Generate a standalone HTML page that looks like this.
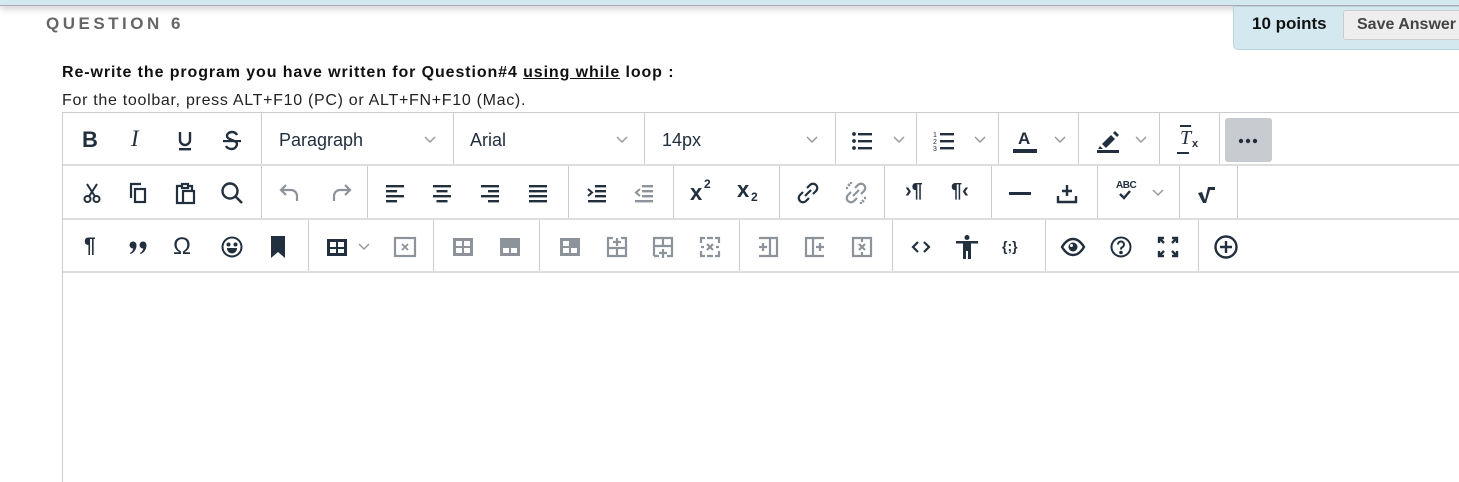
<!DOCTYPE html>
<html><head><meta charset="utf-8"><style>
*{margin:0;padding:0;box-sizing:border-box}
body{width:1459px;height:477px;overflow:hidden;background:#fff;font-family:"Liberation Sans",Arial,sans-serif;position:relative}
.a{position:absolute}
.top{left:0;top:0;width:1459px;height:6px;background:#d4e9ef;border-bottom:1px solid #aab;box-shadow:0 2px 8px rgba(0,0,0,.25)}
.q{left:46px;top:14px;font-size:17px;font-weight:bold;letter-spacing:3.5px;color:#666}
.pts{left:1233px;top:6px;width:240px;height:44px;background:#d4e9ef;border:1px solid #b9d4dc;border-radius:0 0 0 5px}
.pt{left:1252px;top:14px;font-size:17px;font-weight:bold;color:#111}
.btn{left:1343px;top:10px;width:130px;height:30px;background:#eee;border:1px solid #ccc;border-radius:3px;font-size:16px;font-weight:bold;color:#444;padding:5px 0 0 13px;white-space:nowrap}
.t1{left:62px;top:64px;font-size:16px;letter-spacing:0.9px;font-weight:bold;color:#111;white-space:nowrap}
.t2{left:62px;top:92px;font-size:16px;letter-spacing:0.7px;color:#222;white-space:nowrap}
.ed{left:62px;top:112px;width:1400px;height:370px;border-left:1px solid #ccc;border-top:1px solid #ccc}
.hl{left:63px;height:2px;width:1400px;background:#ddd}
.vs{width:1px;background:#ccc}
.tx{font-size:18px;color:#222f3e;top:130px}
.i{position:absolute;width:24px;height:24px}
svg{overflow:visible}
</style></head><body>
<div class="a top"></div>
<div class="a q">QUESTION 6</div>
<div class="a pts"></div>
<div class="a pt">10 points</div>
<div class="a btn">Save Answer</div>
<div class="a t1">Re-write the program you have written for Question#4 <u>using while</u> loop :</div>
<div class="a t2">For the toolbar, press ALT+F10 (PC) or ALT+FN+F10 (Mac).</div>
<div class="a ed"></div>
<div class="a hl" style="top:164px"></div>
<div class="a hl" style="top:218px"></div>
<div class="a hl" style="top:271px"></div>
<div class="a vs" style="left:261px;top:113px;height:51px"></div>
<div class="a vs" style="left:453px;top:113px;height:51px"></div>
<div class="a vs" style="left:644px;top:113px;height:51px"></div>
<div class="a vs" style="left:835px;top:113px;height:51px"></div>
<div class="a vs" style="left:916px;top:113px;height:51px"></div>
<div class="a vs" style="left:998px;top:113px;height:51px"></div>
<div class="a vs" style="left:1078px;top:113px;height:51px"></div>
<div class="a vs" style="left:1159px;top:113px;height:51px"></div>
<div class="a vs" style="left:1219px;top:113px;height:51px"></div>
<div class="a vs" style="left:261px;top:166px;height:52px"></div>
<div class="a vs" style="left:367px;top:166px;height:52px"></div>
<div class="a vs" style="left:568px;top:166px;height:52px"></div>
<div class="a vs" style="left:673px;top:166px;height:52px"></div>
<div class="a vs" style="left:779px;top:166px;height:52px"></div>
<div class="a vs" style="left:884px;top:166px;height:52px"></div>
<div class="a vs" style="left:991px;top:166px;height:52px"></div>
<div class="a vs" style="left:1097px;top:166px;height:52px"></div>
<div class="a vs" style="left:1179px;top:166px;height:52px"></div>
<div class="a vs" style="left:1237px;top:166px;height:52px"></div>
<div class="a vs" style="left:308px;top:220px;height:51px"></div>
<div class="a vs" style="left:433px;top:220px;height:51px"></div>
<div class="a vs" style="left:539px;top:220px;height:51px"></div>
<div class="a vs" style="left:739px;top:220px;height:51px"></div>
<div class="a vs" style="left:892px;top:220px;height:51px"></div>
<div class="a vs" style="left:1045px;top:220px;height:51px"></div>
<div class="a vs" style="left:1198px;top:220px;height:51px"></div>

<div class="a" style="left:82px;top:127px;font-size:22px;font-weight:bold;color:#222f3e">B</div>
<div class="a" style="left:131px;top:126px;font-size:23px;font-style:italic;font-family:'Liberation Serif',serif;color:#222f3e">I</div>
<svg class="i" style="left:173px;top:129px" viewBox="0 0 24 24"><path d="M7 3v8a5 5 0 0 0 10 0V3" fill="none" stroke="#222f3e" stroke-width="2.4"/><rect x="6" y="19" width="12" height="2.4" fill="#222f3e"/></svg>
<svg class="i" style="left:220px;top:129px" viewBox="0 0 24 24"><path d="M17 6c-1-2-3-3-5-3-3 0-5 2-5 4s2 3 5 4 5 2 5 4-2 5-5 5-5-1-6-3" fill="none" stroke="#222f3e" stroke-width="2.4"/><rect x="3" y="11" width="18" height="2.2" fill="#222f3e"/></svg>
<div class="a tx" style="left:279px">Paragraph</div>
<div class="a tx" style="left:470px">Arial</div>
<div class="a tx" style="left:662px">14px</div>
<svg class="i" style="left:424px;top:134px;width:12px;height:12px" viewBox="0 0 12 12"><path d="M1 3l5 5 5-5" fill="none" stroke="#999" stroke-width="1.5"/></svg>
<svg class="i" style="left:616px;top:134px;width:12px;height:12px" viewBox="0 0 12 12"><path d="M1 3l5 5 5-5" fill="none" stroke="#999" stroke-width="1.5"/></svg>
<svg class="i" style="left:806px;top:134px;width:12px;height:12px" viewBox="0 0 12 12"><path d="M1 3l5 5 5-5" fill="none" stroke="#999" stroke-width="1.5"/></svg>
<svg class="i" style="left:893px;top:134px;width:12px;height:12px" viewBox="0 0 12 12"><path d="M1 3l5 5 5-5" fill="none" stroke="#999" stroke-width="1.5"/></svg>
<svg class="i" style="left:974px;top:134px;width:12px;height:12px" viewBox="0 0 12 12"><path d="M1 3l5 5 5-5" fill="none" stroke="#999" stroke-width="1.5"/></svg>
<svg class="i" style="left:1054px;top:134px;width:12px;height:12px" viewBox="0 0 12 12"><path d="M1 3l5 5 5-5" fill="none" stroke="#999" stroke-width="1.5"/></svg>
<svg class="i" style="left:1135px;top:134px;width:12px;height:12px" viewBox="0 0 12 12"><path d="M1 3l5 5 5-5" fill="none" stroke="#999" stroke-width="1.5"/></svg>
<svg class="i" style="left:850px;top:129px" viewBox="0 0 24 24" fill="#222f3e"><circle cx="4" cy="5" r="1.9"/><circle cx="4" cy="12" r="1.9"/><circle cx="4" cy="19" r="1.9"/><rect x="8" y="4" width="14" height="2.4"/><rect x="8" y="11" width="14" height="2.4"/><rect x="8" y="18" width="14" height="2.4"/></svg>
<svg class="i" style="left:932px;top:129px" viewBox="0 0 24 24" fill="#222f3e"><text x="1" y="8" font-size="7" font-family="Liberation Sans">1</text><text x="1" y="15" font-size="7" font-family="Liberation Sans">2</text><text x="1" y="22" font-size="7" font-family="Liberation Sans">3</text><rect x="8" y="4" width="14" height="2.4"/><rect x="8" y="11" width="14" height="2.4"/><rect x="8" y="18" width="14" height="2.4"/></svg>
<div class="a" style="left:1018px;top:129px;font-size:17px;color:#222f3e;font-weight:bold">A</div>
<div class="a" style="left:1013px;top:149px;width:24px;height:4px;background:#222f3e"></div>
<svg class="i" style="left:1096px;top:129px" viewBox="0 0 24 24" fill="#222f3e"><path d="M6 15l9-9 4 4-9 9z M17 4l2-2 4 4-2 2z M4 17l3 3H2z"/><rect x="1" y="21" width="22" height="3"/></svg>
<div class="a" style="left:1180px;top:127px;font-size:20px;font-style:italic;font-family:'Liberation Serif',serif;color:#222f3e;text-decoration:overline">T</div>
<div class="a" style="left:1192px;top:138px;font-size:11px;font-weight:bold;color:#222f3e">x</div>
<div class="a" style="left:1177px;top:152px;width:12px;height:2px;background:#222f3e"></div>
<div class="a" style="left:1225px;top:118px;width:47px;height:44px;background:#c8cbcf;border-radius:3px"></div>
<svg class="i" style="left:1236px;top:129px" viewBox="0 0 24 24" fill="#222f3e"><circle cx="5" cy="12" r="2.2"/><circle cx="12" cy="12" r="2.2"/><circle cx="19" cy="12" r="2.2"/></svg>

<svg class="i" style="left:80px;top:181px" viewBox="0 0 24 24" fill="none" stroke="#222f3e" stroke-width="2"><circle cx="7.5" cy="18" r="3"/><circle cx="16.5" cy="18" r="3"/><path d="M9 15.5L17 3M15 15.5L7 3"/></svg>
<svg class="i" style="left:126px;top:181px" viewBox="0 0 24 24" fill="none" stroke="#222f3e" stroke-width="2.2"><rect x="9" y="8" width="10" height="13"/><path d="M5 17V3h10"/></svg>
<svg class="i" style="left:173px;top:181px" viewBox="0 0 24 24" fill="none" stroke="#222f3e" stroke-width="2.2"><path d="M8 5H4v17h5"/><rect x="9" y="3" width="6" height="4"/><path d="M15 5h4v4"/><rect x="10" y="10" width="11" height="12"/></svg>
<svg class="i" style="left:220px;top:181px" viewBox="0 0 24 24" fill="none" stroke="#222f3e" stroke-width="2.4"><circle cx="10" cy="10" r="7.5"/><path d="M15.5 15.5L22 22"/></svg>
<svg class="i" style="left:278px;top:181px" viewBox="0 0 24 24" fill="none" stroke="#8c939b" stroke-width="2.2"><path d="M8 4L3 9l5 5M3 9h10a6 6 0 0 1 6 6v5"/></svg>
<svg class="i" style="left:329px;top:181px" viewBox="0 0 24 24" fill="none" stroke="#8c939b" stroke-width="2.2"><path d="M16 4l5 5-5 5M21 9H11a6 6 0 0 0-6 6v5"/></svg>
<svg class="i" style="left:383px;top:181px" viewBox="0 0 24 24" fill="#222f3e"><rect x="3" y="4" width="18" height="2.4"/><rect x="3" y="9" width="11" height="2.4"/><rect x="3" y="14" width="18" height="2.4"/><rect x="3" y="19" width="11" height="2.4"/></svg>
<svg class="i" style="left:430px;top:181px" viewBox="0 0 24 24" fill="#222f3e"><rect x="3" y="4" width="18" height="2.4"/><rect x="6.5" y="9" width="11" height="2.4"/><rect x="3" y="14" width="18" height="2.4"/><rect x="6.5" y="19" width="11" height="2.4"/></svg>
<svg class="i" style="left:478px;top:181px" viewBox="0 0 24 24" fill="#222f3e"><rect x="3" y="4" width="18" height="2.4"/><rect x="10" y="9" width="11" height="2.4"/><rect x="3" y="14" width="18" height="2.4"/><rect x="10" y="19" width="11" height="2.4"/></svg>
<svg class="i" style="left:526px;top:181px" viewBox="0 0 24 24" fill="#222f3e"><rect x="3" y="4" width="18" height="2.4"/><rect x="3" y="9" width="18" height="2.4"/><rect x="3" y="14" width="18" height="2.4"/><rect x="3" y="19" width="18" height="2.4"/></svg>
<svg class="i" style="left:585px;top:181px" viewBox="0 0 24 24" fill="#222f3e"><rect x="10" y="4" width="11" height="2.4"/><rect x="10" y="9" width="11" height="2.4"/><rect x="10" y="14" width="11" height="2.4"/><rect x="3" y="19" width="18" height="2.4"/><path d="M3 8l4 3.5-4 3.5" fill="none" stroke="#222f3e" stroke-width="2"/></svg>
<svg class="i" style="left:632px;top:181px" viewBox="0 0 24 24" fill="#8c939b"><rect x="10" y="4" width="11" height="2.4"/><rect x="10" y="9" width="11" height="2.4"/><rect x="10" y="14" width="11" height="2.4"/><rect x="3" y="19" width="18" height="2.4"/><path d="M8 8l-4 3.5 4 3.5" fill="none" stroke="#8c939b" stroke-width="2"/></svg>
<div class="a" style="left:690px;top:180px;font-size:22px;font-weight:bold;color:#222f3e">x</div><div class="a" style="left:704px;top:177px;font-size:12px;font-weight:bold;color:#222f3e">2</div>
<div class="a" style="left:737px;top:177px;font-size:22px;font-weight:bold;color:#222f3e">x</div><div class="a" style="left:751px;top:190px;font-size:12px;font-weight:bold;color:#222f3e">2</div>
<svg class="i" style="left:796px;top:181px" viewBox="0 0 24 24" fill="none" stroke="#222f3e" stroke-width="2.2"><path d="M11 7l3-3a4 4 0 0 1 6 6l-3 3M13 17l-3 3a4 4 0 0 1-6-6l3-3M9 15l6-6"/></svg>
<svg class="i" style="left:844px;top:181px" viewBox="0 0 24 24" fill="none" stroke="#8c939b" stroke-width="2.2"><path d="M11 7l3-3a4 4 0 0 1 6 6l-3 3M13 17l-3 3a4 4 0 0 1-6-6l3-3M9 15l6-6M4 3l2 2M2 7h2M7 1v2M20 21l-2-2M22 17h-2M17 23v-2"/></svg>
<div class="a" style="left:905px;top:180px;font-size:20px;font-weight:bold;color:#222f3e">›¶</div>
<div class="a" style="left:951px;top:180px;font-size:20px;font-weight:bold;color:#222f3e">¶‹</div>
<div class="a" style="left:1009px;top:192px;width:22px;height:3px;background:#222f3e"></div>
<svg class="i" style="left:1055px;top:181px" viewBox="0 0 24 24" fill="none" stroke="#222f3e" stroke-width="2.4"><path d="M3 15v6h18v-6M12 4v11M7 10h10"/></svg>
<div class="a" style="left:1116px;top:180px;font-size:10px;font-weight:bold;color:#222f3e;letter-spacing:-.5px">ABC</div>
<svg class="i" style="left:1117px;top:190px;width:16px;height:10px" viewBox="0 0 16 10"><path d="M3 4l4 4 6-7" fill="none" stroke="#222f3e" stroke-width="2.4"/></svg>
<svg class="i" style="left:1152px;top:187px;width:12px;height:12px" viewBox="0 0 12 12"><path d="M1 3l5 5 5-5" fill="none" stroke="#999" stroke-width="1.5"/></svg>
<svg class="i" style="left:1195px;top:181px" viewBox="0 0 24 24" fill="#222f3e"><path d="M3 12l4-1 3 8 3-13h7v3h-5l-4 13h-3z"/></svg>

<div class="a" style="left:84px;top:234px;font-size:21px;font-weight:bold;color:#222f3e">¶</div>
<svg class="i" style="left:126px;top:235px" viewBox="0 0 24 24" fill="#222f3e"><circle cx="7" cy="10" r="3.5"/><path d="M10.5 10c0 5-3 8-6 9l-.5-1c2-1 3.5-3.5 3.5-6z"/><circle cx="17" cy="10" r="3.5"/><path d="M20.5 10c0 5-3 8-6 9l-.5-1c2-1 3.5-3.5 3.5-6z"/></svg>
<div class="a" style="left:173px;top:233px;font-size:24px;color:#222f3e">Ω</div>
<svg class="i" style="left:220px;top:235px" viewBox="0 0 24 24" fill="none" stroke="#222f3e" stroke-width="2"><circle cx="12" cy="12" r="9.5"/><circle cx="8.5" cy="9.5" r="1" fill="#222f3e"/><circle cx="15.5" cy="9.5" r="1" fill="#222f3e"/><path d="M7.5 13.5h9a4.5 4.5 0 0 1-9 0z" fill="#222f3e" stroke-width="1"/></svg>
<svg class="i" style="left:266px;top:235px" viewBox="0 0 24 24" fill="#222f3e"><path d="M5 1h14v22l-7-6-7 6z"/></svg>
<svg class="i" style="left:325px;top:235px" viewBox="0 0 24 24" fill="#222f3e"><path d="M2 4h20v17H2z M5 7v5h6V7z M13 7v5h6V7z M5 14v4h6v-4z M13 14v4h6v-4z" fill-rule="evenodd"/></svg>
<svg class="i" style="left:358px;top:241px;width:12px;height:12px" viewBox="0 0 12 12"><path d="M1 3l5 5 5-5" fill="none" stroke="#999" stroke-width="1.5"/></svg>
<svg class="i" style="left:393px;top:235px" viewBox="0 0 24 24" fill="none" stroke="#8c939b" stroke-width="2.2"><rect x="2" y="3" width="20" height="18"/><path d="M9 9l6 6M15 9l-6 6" stroke-width="1.8"/></svg>
<svg class="i" style="left:451px;top:235px" viewBox="0 0 24 24" fill="#8c939b"><path d="M2 3h20v18H2z M5 6v5h6V6z M13 6v5h6V6z M5 13v5h6v-5z M13 13v5h6v-5z" fill-rule="evenodd"/></svg>
<svg class="i" style="left:498px;top:235px" viewBox="0 0 24 24" fill="#8c939b"><path d="M2 3h20v18H2z M5 13v5h6v-5z M13 13v5h6v-5z" fill-rule="evenodd"/></svg>
<svg class="i" style="left:558px;top:235px" viewBox="0 0 24 24" fill="#8c939b"><path d="M2 3h20v18H2z M5 6v5h6V6z M5 13v5h6v-5z M13 13v5h6v-5z" fill-rule="evenodd"/></svg>
<svg class="i" style="left:605px;top:235px" viewBox="0 0 24 24" fill="none" stroke="#8c939b" stroke-width="2.2"><path d="M8 3H3v18h18V3h-5M3 13h18M12 13v8M12 3v8M8 7h8"/></svg>
<svg class="i" style="left:651px;top:235px" viewBox="0 0 24 24" fill="none" stroke="#8c939b" stroke-width="2.2"><path d="M3 21V3h18v18h-5M3 11h18M12 3v8M8 21H3M12 14v9M8 18h8"/></svg>
<svg class="i" style="left:698px;top:235px" viewBox="0 0 24 24" fill="none" stroke="#8c939b" stroke-width="2.2"><path d="M7 3H3v5M7 21H3v-5M3 12h3M17 3h4v5M17 21h4v-5M21 12h-3M9 3h6M9 21h6M9 9l6 6M15 9l-6 6"/></svg>
<svg class="i" style="left:756px;top:235px" viewBox="0 0 24 24" fill="none" stroke="#8c939b" stroke-width="2.2"><path d="M8 3h13v18H8M14 3v18M3 12h8M7 8v8M8 3H3M8 21H3"/></svg>
<svg class="i" style="left:803px;top:235px" viewBox="0 0 24 24" fill="none" stroke="#8c939b" stroke-width="2.2"><path d="M16 3H3v18h13M10 3v18M13 12h8M17 8v8M16 3h5M16 21h5"/></svg>
<svg class="i" style="left:850px;top:235px" viewBox="0 0 24 24" fill="none" stroke="#8c939b" stroke-width="2.2"><path d="M3 3h18v18H3zM12 3v4M12 17v4M9 9l6 6M15 9l-6 6"/></svg>
<svg class="i" style="left:909px;top:235px" viewBox="0 0 24 24" fill="none" stroke="#222f3e" stroke-width="2.2"><path d="M9 7l-5 5 5 5M15 7l5 5-5 5"/></svg>
<svg class="i" style="left:955px;top:235px" viewBox="0 0 24 24" fill="#222f3e"><circle cx="12" cy="2.5" r="2.5"/><path d="M1 6h22v2.5h-7V24h-3v-8h-2v8H8V8.5H1z"/></svg>
<div class="a" style="left:1002px;top:238px;font-size:14px;font-weight:bold;color:#222f3e">{;}</div>
<svg class="i" style="left:1061px;top:235px" viewBox="0 0 24 24"><path d="M1 12c3-5 7-8 11-8s8 3 11 8c-3 5-7 8-11 8S4 17 1 12z" fill="none" stroke="#222f3e" stroke-width="2.4"/><circle cx="12" cy="12" r="4.5" fill="#222f3e"/><circle cx="10.5" cy="10.5" r="1.5" fill="#fff"/></svg>
<svg class="i" style="left:1109px;top:235px" viewBox="0 0 24 24" fill="none" stroke="#222f3e" stroke-width="2"><circle cx="12" cy="12" r="9.5"/><path d="M9 9.5a3 3 0 1 1 4 2.8c-1 .5-1 1-1 2.2" /><circle cx="12" cy="17.5" r=".8" fill="#222f3e"/></svg>
<svg class="i" style="left:1156px;top:235px" viewBox="0 0 24 24" fill="none" stroke="#222f3e" stroke-width="2.4"><path d="M3 8V3h5M3 3l5 5M21 8V3h-5M21 3l-5 5M3 16v5h5M3 21l5-5M21 16v5h-5M21 21l-5-5"/></svg>
<svg class="i" style="left:1214px;top:235px" viewBox="0 0 24 24" fill="none" stroke="#222f3e" stroke-width="2.4"><circle cx="12" cy="12" r="10.5"/><path d="M12 6v12M6 12h12"/></svg>
</body></html>
